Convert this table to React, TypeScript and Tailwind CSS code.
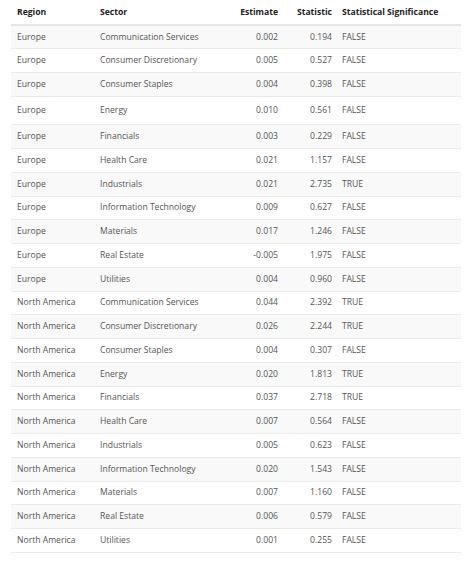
const rows: [string, string, string, string, string][] = [
  ['Europe', 'Communication Services', '0.002', '0.194', 'FALSE'],
  ['Europe', 'Consumer Discretionary', '0.005', '0.527', 'FALSE'],
  ['Europe', 'Consumer Staples', '0.004', '0.398', 'FALSE'],
  ['Europe', 'Energy', '0.010', '0.561', 'FALSE'],
  ['Europe', 'Financials', '0.003', '0.229', 'FALSE'],
  ['Europe', 'Health Care', '0.021', '1.157', 'FALSE'],
  ['Europe', 'Industrials', '0.021', '2.735', 'TRUE'],
  ['Europe', 'Information Technology', '0.009', '0.627', 'FALSE'],
  ['Europe', 'Materials', '0.017', '1.246', 'FALSE'],
  ['Europe', 'Real Estate', '-0.005', '1.975', 'FALSE'],
  ['Europe', 'Utilities', '0.004', '0.960', 'FALSE'],
  ['North America', 'Communication Services', '0.044', '2.392', 'TRUE'],
  ['North America', 'Consumer Discretionary', '0.026', '2.244', 'TRUE'],
  ['North America', 'Consumer Staples', '0.004', '0.307', 'FALSE'],
  ['North America', 'Energy', '0.020', '1.813', 'TRUE'],
  ['North America', 'Financials', '0.037', '2.718', 'TRUE'],
  ['North America', 'Health Care', '0.007', '0.564', 'FALSE'],
  ['North America', 'Industrials', '0.005', '0.623', 'FALSE'],
  ['North America', 'Information Technology', '0.020', '1.543', 'FALSE'],
  ['North America', 'Materials', '0.007', '1.160', 'FALSE'],
  ['North America', 'Real Estate', '0.006', '0.579', 'FALSE'],
  ['North America', 'Utilities', '0.001', '0.255', 'FALSE'],
];

export default function App() {
  return (
    <div className="bg-white w-[474px] h-[561px] px-[11px] font-['Open_Sans',sans-serif] text-[8.6px] text-[#555]">
      <table className="w-[450px] border-collapse table-fixed">
        <colgroup>
          <col className="w-[83px]" />
          <col className="w-[127px]" />
          <col className="w-[63px]" />
          <col className="w-[54px]" />
          <col />
        </colgroup>
        <thead>
          <tr className="h-[25px] border-b-2 border-[#e6e6e6] text-[#222] font-semibold">
            <th className="text-left px-[6px]">Region</th>
            <th className="text-left px-[6px]">Sector</th>
            <th className="text-right px-[6px]">Estimate</th>
            <th className="text-right px-[6px]">Statistic</th>
            <th className="text-left px-[4px] whitespace-nowrap">Statistical Significance</th>
          </tr>
        </thead>
        <tbody>
          {rows.map((r, i) => (
            <tr
              key={i}
              className={`${i === 3 ? 'h-[28.5px]' : 'h-[23.75px]'} border-b border-[#ebebeb] ${
                i % 2 === 0 ? 'bg-[#f9f9f9]' : 'bg-white'
              }`}
            >
              <td className="px-[6px]">{r[0]}</td>
              <td className="px-[6px]">{r[1]}</td>
              <td className="px-[6px] text-right">{r[2]}</td>
              <td className="px-[6px] text-right">{r[3]}</td>
              <td className="px-[4px]">{r[4]}</td>
            </tr>
          ))}
        </tbody>
      </table>
    </div>
  );
}
